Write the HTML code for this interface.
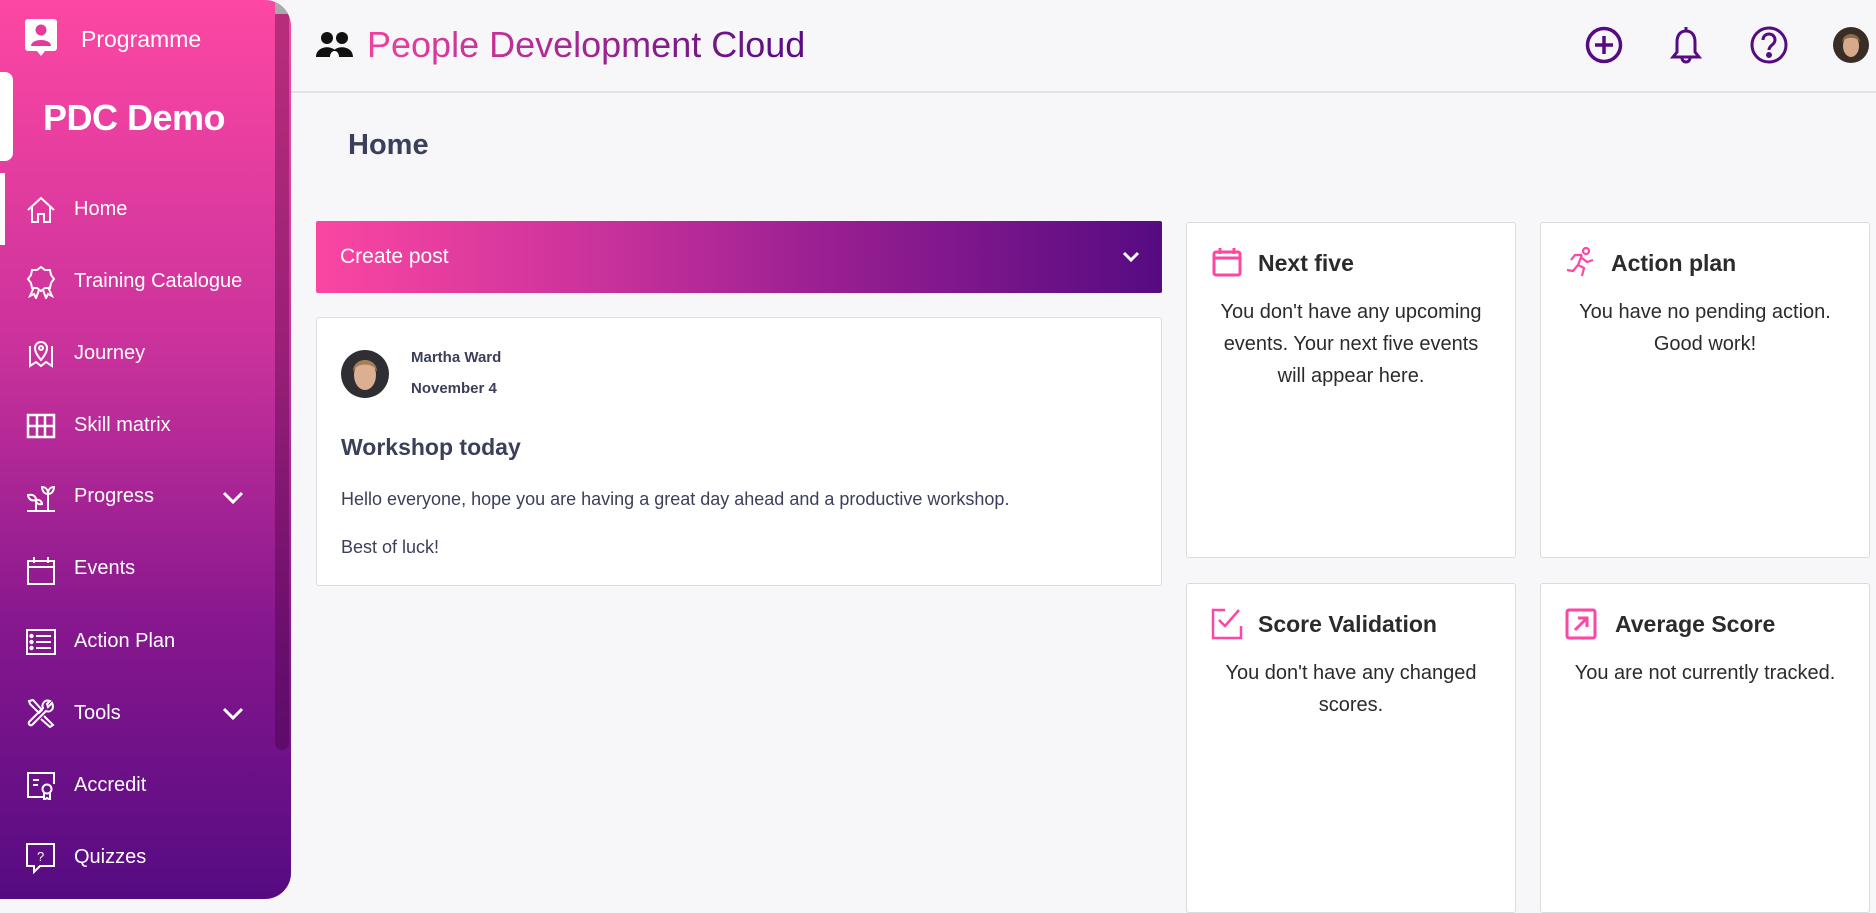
<!DOCTYPE html>
<html><head><meta charset="utf-8"><style>
*{box-sizing:border-box;margin:0;padding:0}
body{width:1876px;height:899px;overflow:hidden;background:#f7f7f9;font-family:"Liberation Sans",sans-serif;position:relative}
.sb{position:absolute;left:0;top:0;width:291px;height:899px;background:linear-gradient(180deg,#fd47a3 0%,#c8319b 40%,#86178e 70%,#560b82 100%);border-radius:0 26px 26px 0;overflow:hidden;color:#fff}
.scroll{position:absolute;left:275px;top:0;width:14px;height:750px;background:rgba(60,0,50,.35);border-radius:0 0 7px 7px}
.scroll:before{content:"";position:absolute;left:0;top:0;width:14px;height:14px;background:#aaa;border-radius:0 10px 0 0}
.prog{position:absolute;left:81px;top:26px;font-size:23px}
.demo{position:absolute;left:0;top:72px;width:13px;height:89px;background:#fff;border-radius:0 8px 8px 0}
.demot{position:absolute;left:43px;top:97px;font-size:36px;font-weight:bold;letter-spacing:-.5px}
.nav{position:absolute;left:74px;font-size:20px}
.ic{position:absolute;left:26px;width:30px;height:30px}
.chev{position:absolute;left:222px;width:22px;height:14px}
.act{position:absolute;left:0;top:173px;width:5px;height:72px;background:#fff}
.hdr{position:absolute;left:291px;top:0;right:0;height:93px;border-bottom:2px solid #e2e2e6}
.title{position:absolute;left:367px;top:24px;font-size:36px;background:linear-gradient(90deg,#f0419e,#5a0d85 95%);-webkit-background-clip:text;color:transparent}
.home{position:absolute;left:348px;top:129px;font-size:29px;font-weight:bold;color:#3b3f5a}
.cp{position:absolute;left:316px;top:221px;width:846px;height:72px;background:linear-gradient(90deg,#fb46a2,#c7319b 35%,#9a1f92 60%,#560b82);border-radius:2px;color:#fff;font-size:21px;padding:24px 0 0 24px}
.card{position:absolute;background:#fff;border:1px solid #dcdce0;border-radius:3px}
.name{position:absolute;font-size:15px;font-weight:bold;color:#3b3f5a}
.wt{position:absolute;left:341px;top:434px;font-size:23px;font-weight:bold;color:#3b3f5a}
.p{position:absolute;left:341px;font-size:18px;color:#3b3f5a}
.ct{position:absolute;font-size:23px;font-weight:bold;color:#2b2b2b;top:27px}
.cb{position:absolute;left:0;right:0;top:73px;text-align:center;font-size:20px;line-height:32px;color:#2b2b2b;padding:0 22px}
</style></head><body>
<div class="sb">
<div class="scroll"></div>
<svg style="position:absolute;left:25px;top:19px" width="32" height="38" viewBox="0 0 32 38"><rect x="0" y="0" width="32" height="32" rx="3" fill="#fff"/><path d="M12 32 L16 37 L20 32Z" fill="#fff"/><circle cx="16" cy="11" r="5.5" fill="#e6399c"/><path d="M6 27 C6 19 26 19 26 27Z" fill="#e6399c"/></svg>
<div class="prog">Programme</div>
<div class="demo"></div><div class="demot">PDC Demo</div>
<div class="act"></div>
<svg class="ic" style="top:195px" viewBox="0 0 30 30" fill="none" stroke="#fff" stroke-width="2"><path d="M2 15 L15 3 L28 15 M6 12 V27 H12 V19 H18 V27 H24 V12"/></svg>
<div class="nav" style="top:198px">Home</div>
<svg class="ic" style="top:265px;height:34px" viewBox="0 0 30 34" fill="none" stroke="#fff" stroke-width="2"><path d="M15 2 L19 5 L24 5 L25 10 L28 14 L25 18 L24 23 L19 23 L15 26 L11 23 L6 23 L5 18 L2 14 L5 10 L6 5 L11 5Z M8 22 L4 31 L8 29 L10 33 L13 25 M22 22 L26 31 L22 29 L20 33 L17 25"/></svg>
<div class="nav" style="top:270px">Training Catalogue</div>
<svg class="ic" style="top:338px" viewBox="0 0 30 30" fill="none" stroke="#fff" stroke-width="2"><path d="M4 8 V28 L10 24 L15 28 L20 24 L26 28 V8 M15 22 C10 16 9 13 9 10 A6 6 0 0 1 21 10 C21 13 20 16 15 22Z"/><circle cx="15" cy="10" r="2"/></svg>
<div class="nav" style="top:342px">Journey</div>
<svg class="ic" style="top:411px" viewBox="0 0 30 30" fill="none" stroke="#fff" stroke-width="2.5"><rect x="2" y="4" width="26" height="22"/><path d="M11 4 V26 M19 4 V26 M2 15 H28"/></svg>
<div class="nav" style="top:414px">Skill matrix</div>
<svg class="ic" style="top:483px" viewBox="0 0 30 30" fill="none" stroke="#fff" stroke-width="2"><path d="M1 28 H29 M10 28 V17 M10 17 C4 19 2 14 2 12 C8 11 10 14 10 17 C14 16 16 19 16 21 C12 22 10 20 10 17 M22 28 V11 M22 11 C17 11 16 6 16 4 C20 4 22 7 22 11 C22 7 24 4 28 4 C28 6 27 11 22 11"/></svg>
<div class="nav" style="top:485px">Progress</div>
<svg class="chev" style="top:491px" viewBox="0 0 22 14" fill="none" stroke="#fff" stroke-width="3"><path d="M2 2 L11 11 L20 2"/></svg>
<svg class="ic" style="top:556px" viewBox="0 0 30 30" fill="none" stroke="#fff" stroke-width="2"><rect x="2" y="5" width="26" height="23"/><path d="M2 11 H28 M8 1 V7 M22 1 V7"/></svg>
<div class="nav" style="top:557px">Events</div>
<svg class="ic" style="top:627px" viewBox="0 0 30 30" fill="none" stroke="#fff" stroke-width="2"><rect x="1" y="3" width="28" height="24"/><path d="M10 9 H25 M10 15 H25 M10 21 H25"/><circle cx="5.5" cy="9" r="1.2" fill="#fff"/><circle cx="5.5" cy="15" r="1.2" fill="#fff"/><circle cx="5.5" cy="21" r="1.2" fill="#fff"/></svg>
<div class="nav" style="top:630px">Action Plan</div>
<svg class="ic" style="top:698px" viewBox="0 0 30 30" fill="none" stroke="#fff" stroke-width="2"><path d="M3 3 L7 2 L16 12 L13 15 L4 6Z M26 5 L22 9 L21 6 L24 3 C19 1 15 6 17 10 L3 24 C2 26 4 28 6 27 L20 13 C24 15 29 11 26 5Z M18 18 L27 27 L24 29 L15 21"/></svg>
<div class="nav" style="top:702px">Tools</div>
<svg class="chev" style="top:707px" viewBox="0 0 22 14" fill="none" stroke="#fff" stroke-width="3"><path d="M2 2 L11 11 L20 2"/></svg>
<svg class="ic" style="top:770px" viewBox="0 0 30 30" fill="none" stroke="#fff" stroke-width="2"><path d="M17 27 H2 V3 H28 V14 M7 10 H13 M7 15 H12"/><circle cx="21" cy="19" r="4.5"/><path d="M18 23 V30 L21 28 L24 30 V23"/></svg>
<div class="nav" style="top:774px">Accredit</div>
<svg class="ic" style="top:842px;height:32px" viewBox="0 0 30 32" fill="none" stroke="#fff" stroke-width="2"><path d="M1 2 H28 V24 H14 L8 30 V24 H1Z"/><text x="11" y="19" font-size="13" fill="#fff" stroke="none" font-family="Liberation Sans">?</text></svg>
<div class="nav" style="top:846px">Quizzes</div>
</div>

<div class="hdr"></div>
<svg style="position:absolute;left:316px;top:30px" width="37" height="28" viewBox="0 0 37 28"><circle cx="11" cy="8" r="6" fill="#111"/><circle cx="26" cy="8" r="6" fill="#111"/><path d="M0 27 C0 14 22 14 22 27Z M15 27 C15 14 37 14 37 27Z" fill="#111"/><path d="M14 27 C14 19 23 19 23 27Z" fill="#fff"/></svg>
<div class="title">People Development Cloud</div>
<svg style="position:absolute;left:1585px;top:26px" width="38" height="38" viewBox="0 0 38 38" fill="none" stroke="#560b82" stroke-width="3.5"><circle cx="19" cy="19" r="16.5"/><path d="M19 10 V28 M10 19 H28"/></svg>
<svg style="position:absolute;left:1669px;top:25px" width="34" height="40" viewBox="0 0 34 40" fill="none" stroke="#560b82" stroke-width="3"><path d="M17 2 V6 M17 6 C10 6 8 12 8 17 V27 L4 32 H30 L26 27 V17 C26 12 24 6 17 6Z M13 33 A4 4 0 0 0 21 33"/></svg>
<svg style="position:absolute;left:1750px;top:26px" width="38" height="38" viewBox="0 0 38 38" fill="none" stroke="#560b82" stroke-width="3"><circle cx="19" cy="19" r="17"/><path d="M13 14 C13 6 25 6 25 14 C25 19 19 19 19 24"/><circle cx="19" cy="29" r="1.5" fill="#560b82"/></svg>
<svg style="position:absolute;left:1833px;top:27px" width="36" height="36" viewBox="0 0 36 36"><circle cx="18" cy="18" r="18" fill="#3a2d26"/><ellipse cx="18" cy="19" rx="8" ry="11" fill="#d9a98c"/><path d="M9 16 C9 4 27 4 27 16 C25 9 11 9 9 16Z" fill="#8b6a4a"/></svg>

<div class="home">Home</div>
<div class="cp">Create post<svg style="position:absolute;right:22px;top:30px" width="18" height="12" viewBox="0 0 18 12" fill="none" stroke="#fff" stroke-width="3"><path d="M2 2 L9 9 L16 2"/></svg></div>

<div class="card" style="left:316px;top:317px;width:846px;height:269px"></div>
<svg style="position:absolute;left:341px;top:350px" width="48" height="48" viewBox="0 0 48 48"><circle cx="24" cy="24" r="24" fill="#2f2f33"/><ellipse cx="24" cy="25" rx="11" ry="15" fill="#dcae92"/><path d="M12 22 C12 6 36 6 36 22 C33 12 15 12 12 22Z" fill="#a57e57"/></svg>
<div class="name" style="left:411px;top:349px">Martha Ward</div>
<div class="name" style="left:411px;top:380px">November 4</div>
<div class="wt">Workshop today</div>
<div class="p" style="top:489px">Hello everyone, hope you are having a great day ahead and a productive workshop.</div>
<div class="p" style="top:537px">Best of luck!</div>

<div class="card" style="left:1186px;top:222px;width:330px;height:336px">
<svg style="position:absolute;left:25px;top:24px" width="30" height="30" viewBox="0 0 30 30" fill="none" stroke="#fd47a3" stroke-width="3"><rect x="2" y="5" width="26" height="23" rx="2"/><path d="M2 11 H28 M8 1 V7 M22 1 V7"/></svg>
<div class="ct" style="left:71px">Next five</div>
<div class="cb">You don't have any upcoming events. Your next five events will appear here.</div></div>
<div class="card" style="left:1540px;top:222px;width:330px;height:336px">
<svg style="position:absolute;left:25px;top:23px" width="30" height="32" viewBox="0 0 30 32" fill="none" stroke="#fd47a3" stroke-width="2.2"><circle cx="20" cy="5" r="3"/><path d="M16 9 L9 9 L5 14 M16 9 L12 19 L18 22 L16 30 M12 19 L7 25 L1 24 M16 12 L21 16 L27 14"/></svg>
<div class="ct" style="left:70px">Action plan</div>
<div class="cb">You have no pending action. Good work!</div></div>
<div class="card" style="left:1186px;top:583px;width:330px;height:330px">
<svg style="position:absolute;left:24px;top:24px" width="32" height="32" viewBox="0 0 32 32" fill="none" stroke="#fd47a3" stroke-width="2.5"><path d="M14 2 H2 V30 H30 V18 M8 12 L14 18 L28 2"/></svg>
<div class="ct" style="left:71px">Score Validation</div>
<div class="cb">You don't have any changed scores.</div></div>
<div class="card" style="left:1540px;top:583px;width:330px;height:330px">
<svg style="position:absolute;left:24px;top:24px" width="32" height="32" viewBox="0 0 32 32" fill="none" stroke="#fd47a3" stroke-width="3"><rect x="2" y="2" width="28" height="28" rx="2"/><path d="M10 22 L22 10 M13 10 H22 V19"/></svg>
<div class="ct" style="left:74px">Average Score</div>
<div class="cb">You are not currently tracked.</div></div>
</body></html>
